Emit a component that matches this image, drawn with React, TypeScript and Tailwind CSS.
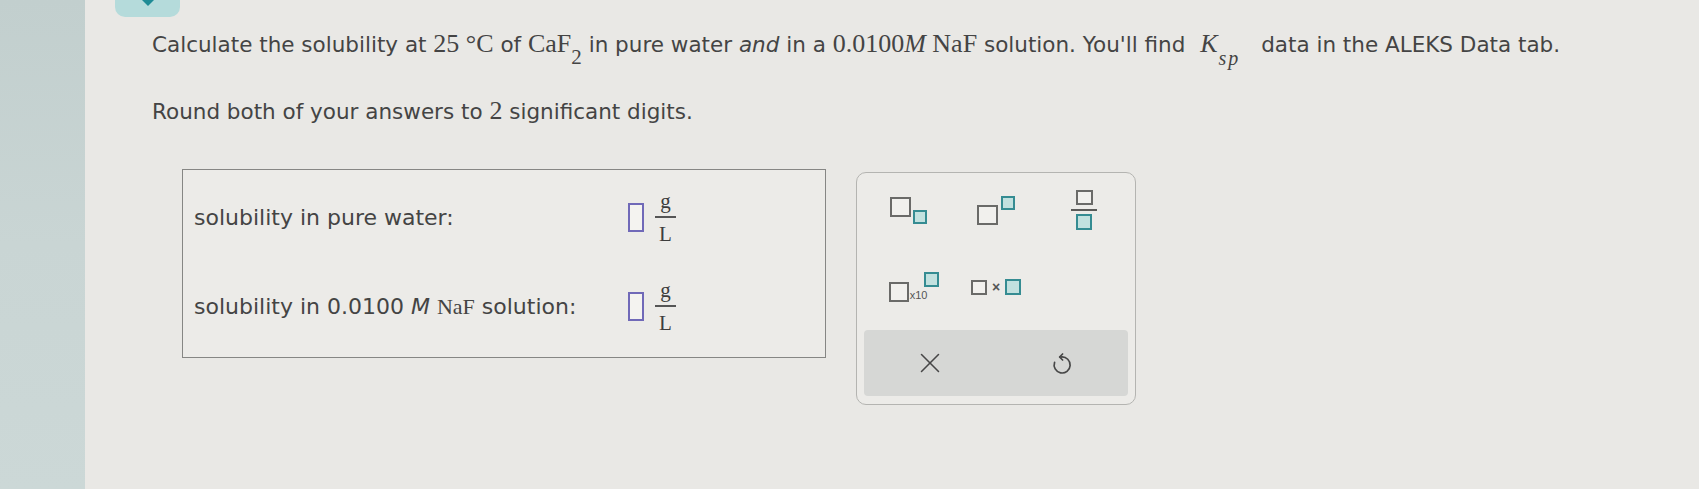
import { X } from 'lucide-react';

const sans = "font-['DejaVu_Sans','Verdana',sans-serif]";
const serif = "font-['Liberation_Serif','Times_New_Roman',serif]";

function GrayBox({ className = '' }: { className?: string }) {
  return <span className={'block border-2 border-[#6a6a68] bg-[#f1f0ed] ' + className} />;
}

function TealBox({ className = '' }: { className?: string }) {
  return <span className={'block border-2 border-[#358c92] bg-[#c2e1df] ' + className} />;
}

function Fraction() {
  return (
    <span className={`inline-flex flex-col items-center ${serif} text-[21px] leading-none text-[#3d3d3d]`}>
      <span className="leading-[20px]">g</span>
      <span className="mb-[7px] mt-[5px] h-[2px] w-[21px] bg-[#555]" />
      <span className="leading-[18px]">L</span>
    </span>
  );
}

function AnswerRow({ label }: { label: React.ReactNode }) {
  return (
    <div className="flex h-[52px] items-center">
      <div className="w-[434px] text-[22px] text-[#444]">{label}</div>
      <span className="h-[29px] w-[16px] border-2 border-[#7069b8] bg-[#f4f3f0]" />
      <span className="ml-[11px]">
        <Fraction />
      </span>
    </div>
  );
}

export default function App() {
  return (
    <div className={`flex h-[489px] w-[1699px] overflow-hidden bg-[#e9e8e5] ${sans}`}>
      <div className="h-full w-[85px] shrink-0 bg-gradient-to-b from-[#c2cfce] via-[#c9d5d4] to-[#ccd8d7]" />
      <div className="relative flex-1 pl-[67px] pt-[31px]">
        <div className="absolute left-[30px] top-0 flex h-[17px] w-[65px] justify-center rounded-b-[10px] bg-[#b5dbdb]">
          <span className="h-0 w-0 border-x-[6px] border-t-[6px] border-x-transparent border-t-[#1f8b95]" />
        </div>

        <p className="text-[21.5px] leading-[28px] text-[#444]">
          Calculate the solubility at{' '}
          <span className={`${serif} text-[26px] leading-none`}>25 °C</span> of{' '}
          <span className={`${serif} text-[26px] leading-none`}>
            CaF<span className="relative top-[12px] text-[21px]">2</span>
          </span>{' '}
          in pure water <i>and</i> in a{' '}
          <span className={`${serif} text-[26px] leading-none`}>
            0.0100<i>M</i> NaF
          </span>{' '}
          solution. You'll find{' '}
          <span className={`${serif} ml-[8px] mr-[14px] text-[26px] leading-none italic`}>
            K<span className="relative top-[13px] ml-[1px] text-[20px] tracking-[2px]">sp</span>
          </span>{' '}
          data in the ALEKS Data tab.
        </p>

        <p className="mt-[39px] text-[21.5px] leading-[28px] text-[#444]">
          Round both of your answers to{' '}
          <span className={`${serif} text-[26px] leading-none`}>2</span> significant digits.
        </p>

        <div className="mt-[43px] flex items-start">
          <div className="ml-[30px] h-[189px] w-[644px] border-[1.5px] border-[#868684] bg-[#ecebe8] pl-[11px] pt-[21px]">
            <AnswerRow label="solubility in pure water:" />
            <div className="h-[37px]" />
            <AnswerRow
              label={
                <>
                  solubility in 0.0100 <i>M</i>{' '}
                  <span className={`${serif} text-[22px]`}>NaF</span> solution:
                </>
              }
            />
          </div>

          <div className="ml-[30px] mt-[3px] flex h-[233px] w-[280px] flex-col rounded-[10px] border border-[#b4b4b1] bg-[#ecebe8] px-[7px] pt-[17px]">
            <div className="grid h-[40px] grid-cols-3 items-center">
              <div className="flex justify-center">
                <div className="flex items-start">
                  <GrayBox className="h-[20px] w-[21px]" />
                  <TealBox className="ml-[2px] mt-[13px] h-[14px] w-[14px]" />
                </div>
              </div>
              <div className="flex justify-center">
                <div className="flex items-start">
                  <GrayBox className="mt-[9px] h-[20px] w-[21px]" />
                  <TealBox className="ml-[3px] h-[14px] w-[14px]" />
                </div>
              </div>
              <div className="flex justify-center">
                <div className="flex flex-col items-center">
                  <GrayBox className="h-[15px] w-[17px]" />
                  <span className="mb-[3px] mt-[4px] h-[2px] w-[26px] bg-[#5a5a58]" />
                  <TealBox className="h-[16px] w-[16px]" />
                </div>
              </div>
            </div>

            <div className="mt-[37px] grid h-[40px] grid-cols-3 items-center">
              <div className="flex justify-center">
                <div className="relative flex items-end pt-[10px]">
                  <GrayBox className="h-[20px] w-[20px]" />
                  <span className="mb-[1px] ml-[1px] font-['Liberation_Sans',sans-serif] text-[11px] leading-none text-[#555]">
                    x10
                  </span>
                  <TealBox className="absolute left-[35px] top-0 h-[15px] w-[15px]" />
                </div>
              </div>
              <div className="flex justify-center">
                <div className="flex items-center">
                  <GrayBox className="h-[15px] w-[16px]" />
                  <span className="mx-[5px] font-['Liberation_Sans',sans-serif] text-[14px] font-bold leading-none text-[#555]">
                    ×
                  </span>
                  <TealBox className="h-[16px] w-[16px]" />
                </div>
              </div>
              <div />
            </div>

            <div className="mt-[23px] grid h-[66px] grid-cols-2 items-center rounded-[4px] bg-[#d6d7d5]">
              <div className="flex justify-center">
                <X className="h-[34px] w-[34px] text-[#474747]" strokeWidth={1.1} />
              </div>
              <div className="flex justify-center">
                <svg width="24" height="24" viewBox="0 0 24 24" fill="none" stroke="#474747" strokeWidth="1.7" strokeLinecap="round" strokeLinejoin="round">
                  <path d="M4.6 11.3 A8 8 0 1 0 11.5 6" />
                  <path d="M11.5 6 H10" />
                  <path d="M12.6 3 L9.6 6 L12.6 9" />
                </svg>
              </div>
            </div>
          </div>
        </div>
      </div>
    </div>
  );
}
